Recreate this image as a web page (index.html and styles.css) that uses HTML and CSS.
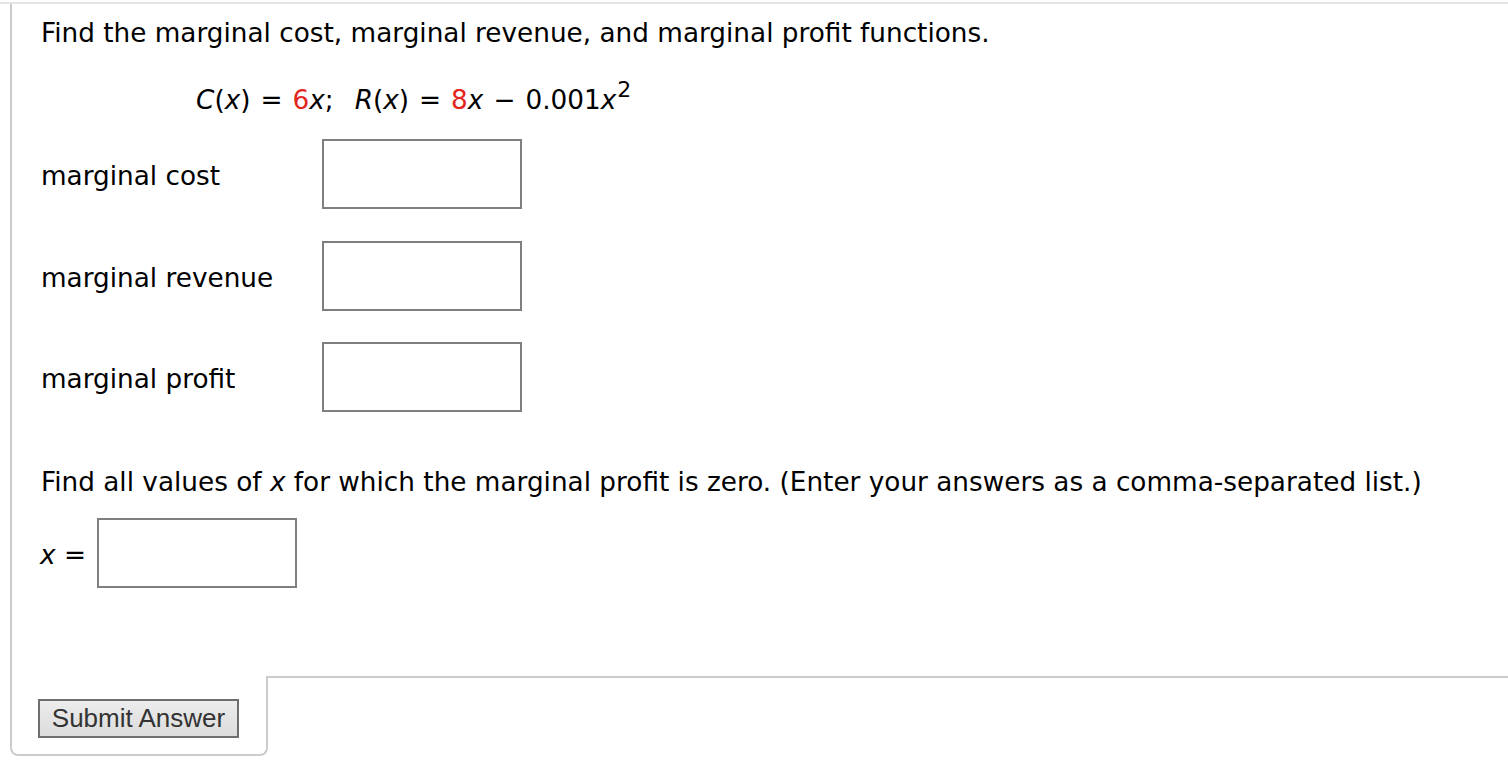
FILE: index.html
```html
<!DOCTYPE html>
<html>
<head>
<meta charset="utf-8">
<title>Marginal functions</title>
<link rel="stylesheet" href="styles.css">
</head>
<body>
<div class="page">
  <div class="question">
    <p class="prompt">Find the marginal cost, marginal revenue, and marginal profit functions.</p>
    <p class="equation"><i>C</i>(<i>x</i>)<span class="op">=</span><span class="red">6</span><i>x</i>;<span class="gap"></span><i>R</i>(<i>x</i>)<span class="op">=</span><span class="red">8</span><i>x</i><span class="op">−</span>0.001<i>x</i><sup>2</sup></p>
    <div class="answers">
      <div class="answer-row"><span class="label">marginal cost</span><span class="input-box"></span></div>
      <div class="answer-row"><span class="label">marginal revenue</span><span class="input-box"></span></div>
      <div class="answer-row"><span class="label">marginal profit</span><span class="input-box"></span></div>
    </div>
    <p class="prompt second">Find all values of <i>x</i> for which the marginal profit is zero. (Enter your answers as a comma-separated list.)</p>
    <div class="x-row"><span class="x-label"><i>x</i> <span class="op">=</span></span><span class="input-box"></span></div>
  </div>
  <div class="footer">
    <div class="tab"><button class="submit" type="button">Submit Answer</button></div>
    <div class="filler"></div>
  </div>
</div>
</body>
</html>
```
FILE: styles.css
```css
html, body {
  margin: 0;
  padding: 0;
  background: #ffffff;
}

body {
  font-family: "DejaVu Sans", Verdana, sans-serif;
  font-size: 26.3px;
  color: #000000;
}

.page {
  padding-top: 2px;
}

.question {
  border-top: 2px solid #e5e5e5;
  height: 674px;
  box-sizing: border-box;
  padding: 14px 0 0 0;
  background: linear-gradient(#cccccc, #cccccc) no-repeat 10px 0 / 2px 100%;
}

.prompt {
  margin: 0 0 0 12px;
  padding-left: 29px;
  line-height: 30px;
}

.equation {
  margin: 37px 0 0 12px;
  padding-left: 184px;
  line-height: 30px;
}

.equation .op {
  margin: 0 10px 0 10px;
}

.equation .gap {
  display: inline-block;
  width: 21px;
}

.equation sup {
  font-size: 22px;
  line-height: 0;
  vertical-align: 12px;
  margin-left: 1px;
}

.red {
  color: #e3261b;
}

.answers {
  margin: 24px 0 0 12px;
  padding-left: 29px;
  display: flex;
  flex-direction: column;
  gap: 31.5px;
}

.answer-row {
  display: grid;
  grid-template-columns: 281px 200px;
  align-items: center;
}

.label {
  line-height: 30px;
  padding-top: 4px;
}

.input-box {
  display: block;
  width: 200px;
  height: 70px;
  box-sizing: border-box;
  border: 2px solid #7f7f7f;
  background: #ffffff;
}

.second {
  margin-top: 55px;
}

.x-row {
  margin: 21px 0 0 12px;
  padding-left: 28px;
  display: flex;
  align-items: center;
  gap: 11px;
}

.x-label {
  padding-top: 4px;
}

.footer {
  display: flex;
  align-items: flex-start;
}

.tab {
  margin-left: 10px;
  width: 258px;
  box-sizing: border-box;
  border: 2px solid #cccccc;
  border-top: none;
  border-radius: 0 0 8px 8px;
  padding: 23px 0 16px 26px;
}

.filler {
  flex: 1;
  border-top: 2px solid #cccccc;
  margin-left: -2px;
}

.submit {
  display: block;
  width: 201px;
  height: 39px;
  box-sizing: border-box;
  border: 2px solid #6e6e6e;
  border-radius: 0;
  background: linear-gradient(#ececec, #dcdcdc);
  font-family: "Liberation Sans", Arial, sans-serif;
  font-size: 26px;
  color: #333333;
  padding: 0;
  line-height: 33px;
}
```
